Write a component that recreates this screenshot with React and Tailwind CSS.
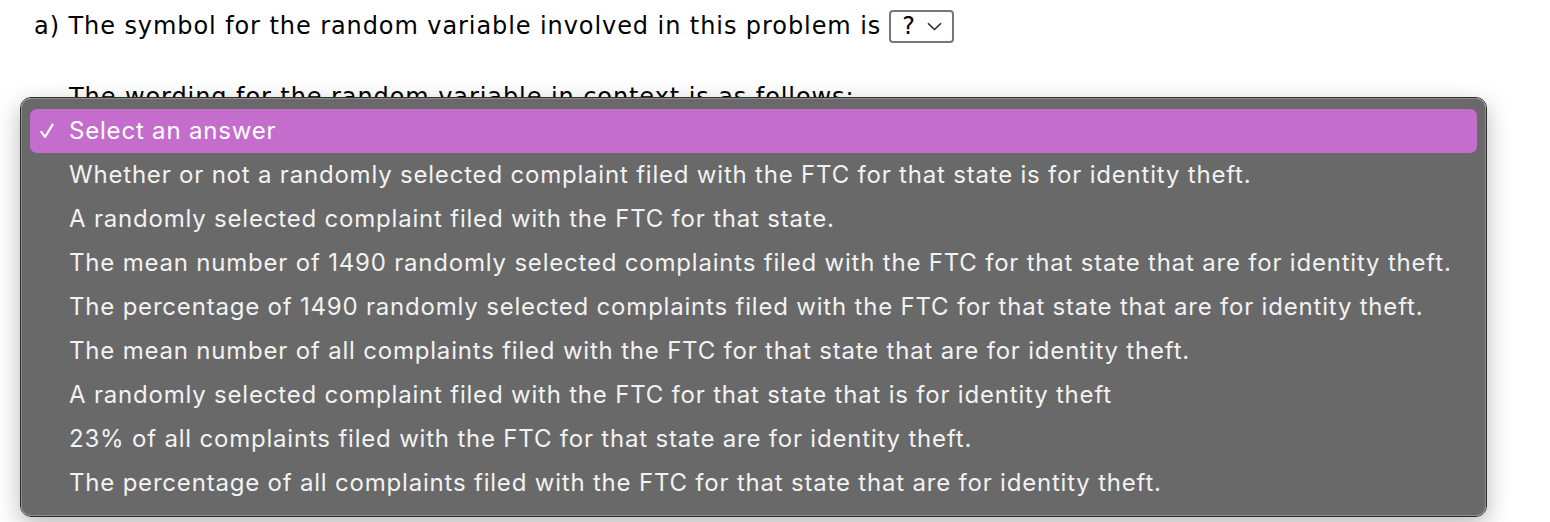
import { useState } from "react";

const OPTIONS = [
  "Select an answer",
  "Whether or not a randomly selected complaint filed with the FTC for that state is for identity theft.",
  "A randomly selected complaint filed with the FTC for that state.",
  "The mean number of 1490 randomly selected complaints filed with the FTC for that state that are for identity theft.",
  "The percentage of 1490 randomly selected complaints filed with the FTC for that state that are for identity theft.",
  "The mean number of all complaints filed with the FTC for that state that are for identity theft.",
  "A randomly selected complaint filed with the FTC for that state that is for identity theft",
  "23% of all complaints filed with the FTC for that state are for identity theft.",
  "The percentage of all complaints filed with the FTC for that state that are for identity theft.",
];

function Chevron() {
  return (
    <svg width="15" height="9" viewBox="0 0 15 9" className="ml-[12px]">
      <path d="M1 1.2 L7.5 7.5 L14 1.2" fill="none" stroke="#222" strokeWidth="1.5" />
    </svg>
  );
}

function Check() {
  return (
    <svg width="14" height="16" viewBox="0 0 14 16" className="shrink-0">
      <path d="M1.3 8.8 L5 14 L12.6 1.6" fill="none" stroke="#fff" strokeWidth="2.1" strokeLinecap="round" strokeLinejoin="round" />
    </svg>
  );
}

export default function App() {
  const [selected] = useState(0);

  return (
    <div className="relative w-[1550px] h-[522px] bg-white overflow-hidden">
      {/* question text */}
      <div className="pl-[34px] pt-[9px] font-['DejaVu_Sans',sans-serif] text-[24px] tracking-[0.92px] text-black">
        <div className="flex items-center h-[34px]">
          <span>a) The symbol for the random variable involved in this problem is</span>
          <span className="ml-[8px] flex items-center h-[33px] pl-[11px] pr-[10px] border-2 border-[#777] rounded-[4px] tracking-normal">
            ?<Chevron />
          </span>
        </div>
        <p className="pl-[35px] mt-[36px]">The wording for the random variable in context is as follows:</p>
      </div>

      {/* open select menu */}
      <div className="absolute left-[20px] top-[97px] w-[1467px] rounded-[11px] border border-[#2e2e2e] shadow-[0_8px_24px_rgba(0,0,0,0.28)]">
        <div className="rounded-[10px] border border-[#8c8c8c] bg-[#696969] px-[8px] py-[10px] font-['Inter',sans-serif] text-[24px] tracking-[0.8px] text-[#f2f2f2]">
          {OPTIONS.map((label, i) => (
            <div
              key={label}
              className={`flex items-center h-[44px] rounded-[7px] ${i === selected ? "bg-[#c56dcd] text-white" : ""}`}
            >
              <span className="w-[39px] pl-[10px] flex items-center">{i === selected ? <Check /> : null}</span>
              <span>{label}</span>
            </div>
          ))}
        </div>
      </div>
    </div>
  );
}
